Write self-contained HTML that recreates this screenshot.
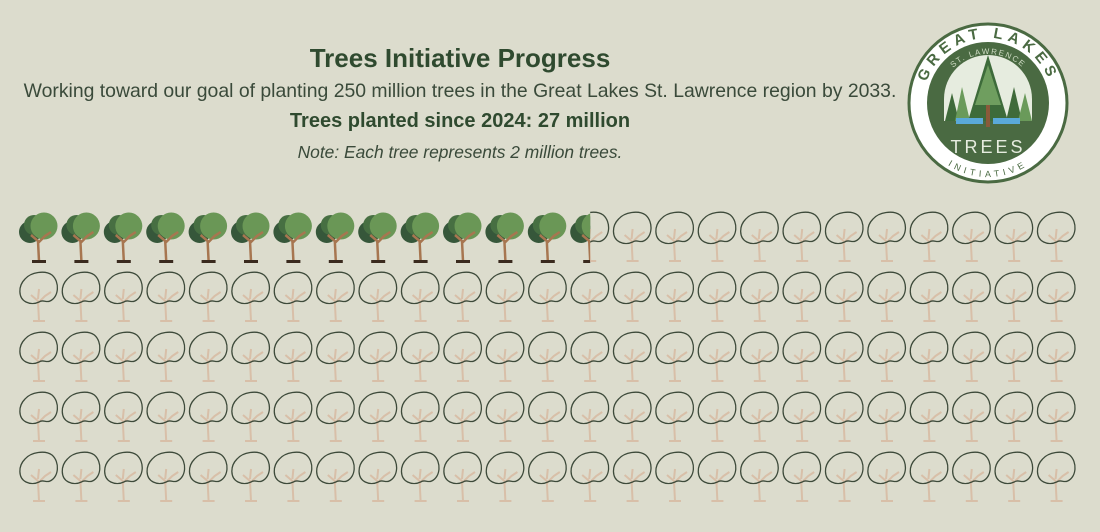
<!DOCTYPE html>
<html><head><meta charset="utf-8">
<style>
html,body{margin:0;padding:0;background:#dcdccd;width:1100px;height:532px;overflow:hidden;font-family:"Liberation Sans",sans-serif;color:#2f4a2f}
.t{position:absolute;left:0;width:920px;text-align:center;white-space:nowrap}
#grid{position:absolute;left:0;top:0}
</style></head><body>
<div class="t" style="top:43px;font-size:26px;font-weight:bold">Trees Initiative Progress</div>
<div class="t" style="top:80px;font-size:19.4px;color:#3a4a3a">Working toward our goal of planting 250 million trees in the Great Lakes St. Lawrence region by 2033.</div>
<div class="t" style="top:110px;font-size:20px;font-weight:bold">Trees planted since 2024: 27 million</div>
<div class="t" style="top:142px;font-size:17.4px;font-style:italic;color:#3a4a3a">Note: Each tree represents 2 million trees.</div>

<svg width="180" height="180" viewBox="0 0 180 180" style="position:absolute;left:898px;top:13px">
<defs>
<path id="arcTop" d="M25,90 A65,65 0 0 1 155,90"/>
<path id="arcTop2" d="M39,92 A51,51 0 0 1 141,92"/>
<path id="arcBot" d="M16,90 A74,74 0 0 0 164,90"/>
</defs>
<circle cx="90" cy="90" r="79" fill="#fff" stroke="#4a6a42" stroke-width="3"/>
<circle cx="90" cy="90" r="61" fill="#4a6a42"/>
<path d="M46,108 L46,86 A44,44 0 0 1 134,86 L134,108 Z" fill="#e6ecdf"/>
<polygon points="47,108 54,80 61,108" fill="#3f6a3a"/>
<polygon points="57,108 64,74 72,108" fill="#6a9a5a"/>
<polygon points="108,108 116,74 124,108" fill="#3f6a3a"/>
<polygon points="120,108 127,80 134,108" fill="#6a9a5a"/>
<polygon points="70,108 90,42 110,108" fill="#3d6b3a"/>
<polygon points="77,92 90,52 103,92" fill="#6f9e5f"/>
<rect x="58" y="105" width="27" height="6" fill="#5aa9d9"/>
<rect x="95" y="105" width="27" height="6" fill="#5aa9d9"/>
<rect x="88" y="92" width="4" height="22" fill="#8a5a3a"/>
<text font-size="15" font-weight="bold" fill="#4a6a42" letter-spacing="5" font-family="Liberation Sans"><textPath href="#arcTop" startOffset="50%" text-anchor="middle">GREAT LAKES</textPath></text>
<text font-size="8" fill="#cfdcc4" letter-spacing="1.5" font-family="Liberation Sans"><textPath href="#arcTop2" startOffset="50%" text-anchor="middle">ST. LAWRENCE</textPath></text>
<text x="90" y="140" font-size="18" fill="#e6ecdf" text-anchor="middle" letter-spacing="3" font-family="Liberation Sans">TREES</text>
<text font-size="9" fill="#4a6a42" letter-spacing="4" font-family="Liberation Sans"><textPath href="#arcBot" startOffset="50%" text-anchor="middle">INITIATIVE</textPath></text>
</svg>

<svg id="grid" width="1100" height="532">
<defs>
<g id="full">
<circle cx="11" cy="21" r="11" fill="#36573a"/>
<circle cx="15" cy="14" r="10" fill="#476f42"/>
<circle cx="25" cy="15" r="13.5" fill="#6a9756"/>
<path d="M20,50 L19,30 L12,24 M19,32 L26,25 L32,21" stroke="#a77650" stroke-width="2.5" fill="none"/>
<rect x="13" y="49" width="14" height="3" fill="#3a2a1e"/>
</g>
<g id="empty">
<path d="M20,50 L19,30 L12,24 M19,32 L26,25 L32,21 M19,28 L20,18" stroke="#d8bfa8" stroke-width="2" fill="none"/>
<path d="M7,31 C-1,27 -1,15 6,8 C12,1 26,-1 33,4 C41,11 40,26 31,30 C27,32 24,28 20,31 C16,33 11,33 7,31 Z" fill="none" stroke="#3d4a3a" stroke-width="1.3"/>
<rect x="14" y="49" width="12" height="2" fill="#d8bfa8"/>
</g>
<clipPath id="L"><rect x="-5" y="-5" width="25" height="65"/></clipPath>
<clipPath id="R"><rect x="20" y="-5" width="30" height="65"/></clipPath>
</defs>
</svg>
<script>
var g=document.getElementById('grid'),s='';
for(var r=0;r<5;r++)for(var c=0;c<25;c++){
 var i=r*25+c,x=(19+c*42.4).toFixed(1),y=211+r*60;
 if(i<13)s+='<use href="#full" transform="translate('+x+','+y+')"/>';
 else if(i==13)s+='<g transform="translate('+x+','+y+')"><use href="#full" clip-path="url(#L)"/><use href="#empty" clip-path="url(#R)"/></g>';
 else s+='<use href="#empty" transform="translate('+x+','+y+')"/>';
}
g.insertAdjacentHTML('beforeend',s);
</script>
</body></html>
